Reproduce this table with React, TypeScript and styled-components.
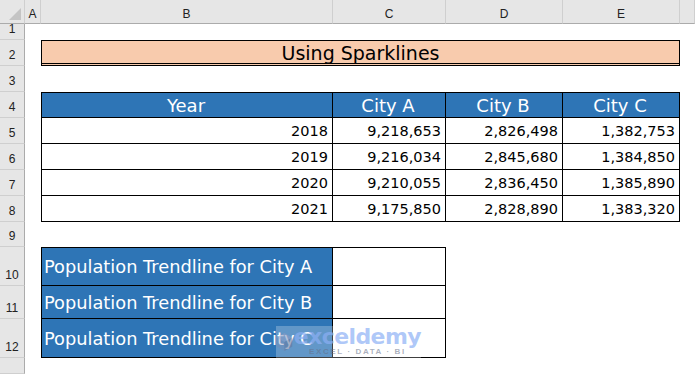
import React from 'react'
import styled, {createGlobalStyle} from 'styled-components'

const GlobalStyle = createGlobalStyle`
  html, body {
    margin: 0;
    padding: 0;
    background: #ffffff;
  }
`

const palette = {
  headerGray: '#e6e6e6',
  headerLine: '#ababab',
  headerSep: '#cfcfcf',
  blue: '#2e75b6',
  peach: '#f8cbad',
  ink: '#000000',
}

const cellFont = `'DejaVu Sans', 'Liberation Sans', sans-serif`

// 시트 전체를 하나의 grid로 잡는다 (행/열 크기는 엑셀 화면에서 잰 값)
const Sheet = styled.div`
  position: relative;
  width: 695px;
  height: 374px;
  overflow: hidden;
  display: grid;
  grid-template-columns: 25px 16px 292px 113px 117px 117px 1fr;
  grid-template-rows: 24px 16px 26px 26px 26px 26px 26px 26px 26px 25px 39px 33px 39px 1fr;
  background: #fff;
`

const Corner = styled.div`
  grid-column: 1;
  grid-row: 1;
  position: relative;
  background: ${palette.headerGray};
  border-right: 1px solid ${palette.headerSep};
  border-bottom: 1px solid ${palette.headerLine};
  &::after {
    content: '';
    position: absolute;
    right: 3px;
    bottom: 3px;
    width: 0;
    height: 0;
    border-left: 12px solid transparent;
    border-bottom: 12px solid #c4c4c4;
  }
`

const ColHead = styled.div<{$col: number}>`
  grid-column: ${(p) => p.$col};
  grid-row: 1;
  background: ${palette.headerGray};
  border-right: 1px solid ${palette.headerSep};
  border-bottom: 1px solid ${palette.headerLine};
  display: flex;
  align-items: center;
  justify-content: center;
  padding-top: 4px;
  box-sizing: border-box;
  font-family: 'Liberation Sans', Arial, sans-serif;
  font-size: 12px;
  color: #222;
`

const RowHead = styled.div<{$row: number}>`
  grid-row: ${(p) => p.$row};
  grid-column: 1;
  background: ${palette.headerGray};
  border-right: 1px solid ${palette.headerLine};
  border-bottom: 1px solid ${palette.headerSep};
  display: flex;
  align-items: flex-end;
  justify-content: center;
  padding-bottom: 3px;
  box-sizing: border-box;
  font-family: 'Liberation Sans', Arial, sans-serif;
  font-size: 12px;
  color: #222;
`

const Title = styled.div`
  grid-column: 3 / 7;
  grid-row: 3;
  background: ${palette.peach};
  border: 1px solid ${palette.ink};
  border-bottom: 3px double ${palette.ink};
  box-sizing: border-box;
  display: flex;
  align-items: center;
  justify-content: center;
  padding-top: 1px;
  font-family: ${cellFont};
  font-size: 19px;
  color: #000;
`

const Cell = styled.div<{
  $row: number
  $col: number
  $head?: boolean
  $size?: number
  $align?: 'left' | 'right' | 'center'
  $top?: boolean
  $left?: boolean
}>`
  grid-row: ${(p) => p.$row};
  grid-column: ${(p) => p.$col};
  box-sizing: border-box;
  display: flex;
  align-items: center;
  justify-content: ${(p) =>
    p.$align === 'left' ? 'flex-start' : p.$align === 'center' ? 'center' : 'flex-end'};
  padding: 0 4px 0 2px;
  background: ${(p) => (p.$head ? palette.blue : '#fff')};
  color: ${(p) => (p.$head ? '#fff' : '#000')};
  border-right: 1px solid ${palette.ink};
  border-bottom: 1px solid ${palette.ink};
  border-top: ${(p) => (p.$top ? `1px solid ${palette.ink}` : 'none')};
  border-left: ${(p) => (p.$left ? `1px solid ${palette.ink}` : 'none')};
  font-family: ${cellFont};
  font-size: ${(p) => p.$size ?? 14.5}px;
  white-space: nowrap;
  overflow: visible;
`

// 워터마크는 셀 위에 겹쳐지는 오버레이
const Watermark = styled.div`
  position: absolute;
  left: 276px;
  top: 326px;
  width: 145px;
  height: 32px;
  display: flex;
  align-items: center;
  gap: 1px;
  background: rgba(255, 255, 255, 0.25);
  pointer-events: none;
`

const WmText = styled.div`
  display: flex;
  flex-direction: column;
  align-items: center;
  line-height: 1;
  margin-top: -2px;
`

const WmBrand = styled.span`
  font-family: 'DejaVu Sans', sans-serif;
  font-weight: bold;
  font-size: 22px;
  color: rgba(140, 175, 245, 0.7);
  letter-spacing: -0.6px;
`

const WmSub = styled.span`
  font-family: 'Liberation Sans', sans-serif;
  font-weight: bold;
  font-size: 8px;
  letter-spacing: 1.6px;
  color: rgba(100, 110, 135, 0.55);
`

const columns = ['A', 'B', 'C', 'D', 'E', '']
const rowNums = [1, 2, 3, 4, 5, 6, 7, 8, 9, 10, 11, 12, 0]

const data = [
  {year: 2018, a: '9,218,653', b: '2,826,498', c: '1,382,753'},
  {year: 2019, a: '9,216,034', b: '2,845,680', c: '1,384,850'},
  {year: 2020, a: '9,210,055', b: '2,836,450', c: '1,385,890'},
  {year: 2021, a: '9,175,850', b: '2,828,890', c: '1,383,320'},
]

const trendCities = ['A', 'B', 'C']

const App: React.FC = () => {
  return (
    <>
      <GlobalStyle />
      <Sheet>
        <Corner />
        {columns.map((c, i) => (
          <ColHead key={i} $col={i + 2}>
            {c}
          </ColHead>
        ))}
        {rowNums.map((n, i) => (
          <RowHead key={i} $row={i + 2}>
            {n > 0 ? n : ''}
          </RowHead>
        ))}

        <Title>Using Sparklines</Title>

        {/* 4행 헤더 */}
        {['Year', 'City A', 'City B', 'City C'].map((h, i) => (
          <Cell key={h} $row={5} $col={i + 3} $head $size={18} $align='center' $top $left={i === 0}>
            {h}
          </Cell>
        ))}
        {data.map((d, r) => (
          <React.Fragment key={d.year}>
            <Cell $row={r + 6} $col={3} $left>
              {d.year}
            </Cell>
            <Cell $row={r + 6} $col={4}>{d.a}</Cell>
            <Cell $row={r + 6} $col={5}>{d.b}</Cell>
            <Cell $row={r + 6} $col={6}>{d.c}</Cell>
          </React.Fragment>
        ))}

        {trendCities.map((c, r) => (
          <React.Fragment key={c}>
            <Cell $row={r + 11} $col={3} $head $size={17.8} $align='left' $left $top={r === 0}>
              Population Trendline for City {c}
            </Cell>
            <Cell $row={r + 11} $col={4} $top={r === 0} />
          </React.Fragment>
        ))}

        <Watermark>
          <svg width='26' height='30' viewBox='0 0 26 30'>
            <polygon points='13,1 25,8 25,22 13,29 1,22 1,8' fill='rgba(120,140,180,0.4)' />
            <polygon points='13,1 25,8 13,15 1,8' fill='rgba(150,170,210,0.35)' />
            <polygon points='13,15 25,8 25,22 13,29' fill='rgba(80,100,140,0.3)' />
          </svg>
          <WmText>
            <WmBrand>exceldemy</WmBrand>
            <WmSub>EXCEL · DATA · BI</WmSub>
          </WmText>
        </Watermark>
      </Sheet>
    </>
  )
}

export default App
